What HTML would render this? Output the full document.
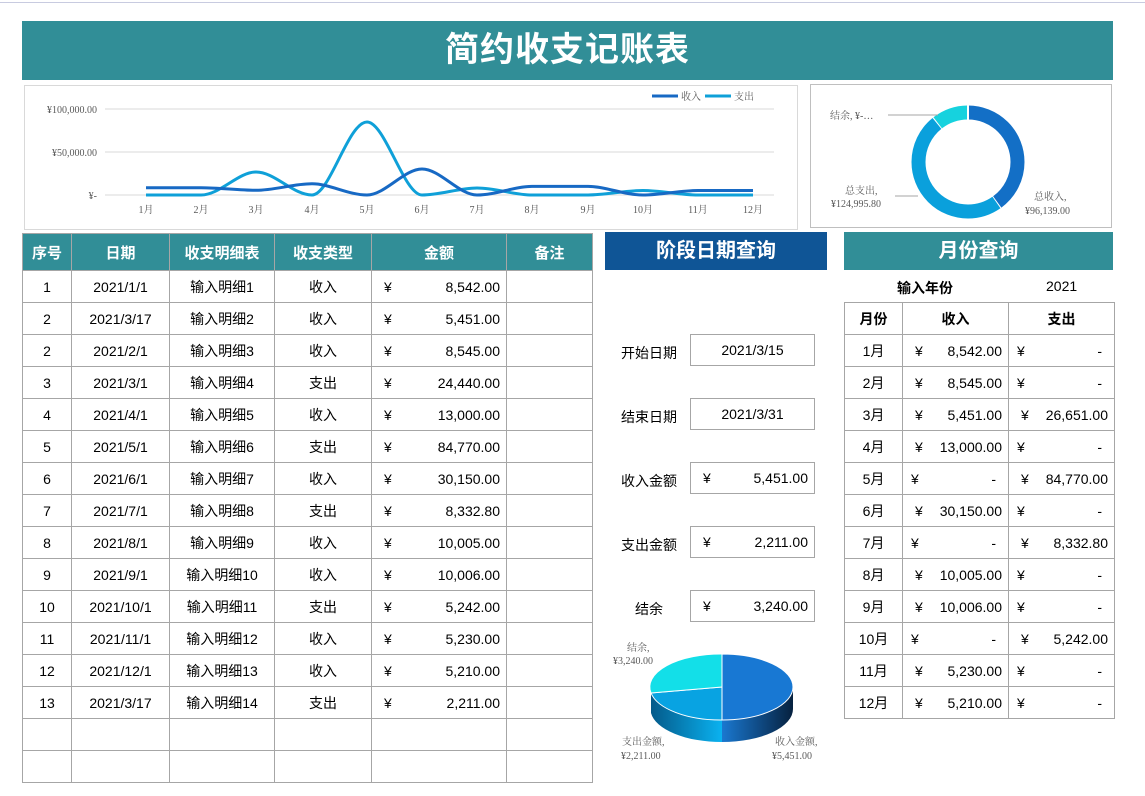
<!DOCTYPE html>
<html><head><meta charset="utf-8"><style>
*{margin:0;padding:0;box-sizing:border-box}
body{width:1145px;height:796px;background:#fff;position:relative;overflow:hidden;font-family:"Liberation Sans","Noto Sans CJK SC",sans-serif;color:#000;font-size:14px}
.a{position:absolute}
.title{left:22px;top:21px;width:1091px;height:59px;background:#318e97;color:#fff;font-size:34px;font-weight:bold;text-align:center;line-height:59px;letter-spacing:1px}
table{border-collapse:collapse;position:absolute;table-layout:fixed}
td{border:1px solid #a6a6a6;height:32px;text-align:center;font-size:14px;padding:0;white-space:nowrap}
th{background:#318e97;color:#fff;border:1px solid #a6a6a6;font-weight:bold;font-size:15px;height:37px}
.m{display:flex;justify-content:space-between;padding:0 6px 0 12px}
.hd{color:#fff;font-weight:bold;font-size:20px;text-align:center;line-height:38px;height:38px}
.lbl{width:80px;text-align:center;font-size:14px}
.box{border:1px solid #a6a6a6;width:125px;height:32px;text-align:center;line-height:30px;font-size:14px}
.box.m{display:flex;justify-content:space-between;padding:0 6px 0 12px;line-height:30px}
</style></head><body>
<div class="a" style="left:0;top:2px;width:1145px;height:1px;background:#c8cbe0"></div>
<div class="a title">简约收支记账表</div>

<div class="a" style="left:24px;top:85px;width:774px;height:145px;border:1px solid #d9d9d9"></div>
<svg class="a" style="left:0;top:0" width="1145" height="796" font-family="Liberation Serif, Noto Serif CJK SC, serif" font-size="10" fill="#595959">
<line x1="105" y1="109" x2="774" y2="109" stroke="#d9d9d9"/>
<line x1="105" y1="152" x2="774" y2="152" stroke="#d9d9d9"/>
<line x1="105" y1="195" x2="774" y2="195" stroke="#d9d9d9"/>
<text x="97" y="113" text-anchor="end">¥100,000.00</text>
<text x="97" y="156" text-anchor="end">¥50,000.00</text>
<text x="97" y="199" text-anchor="end">¥-</text>
<g text-anchor="middle" font-size="10">
<text x="146" y="213">1月</text><text x="201" y="213">2月</text><text x="256" y="213">3月</text><text x="312" y="213">4月</text><text x="367" y="213">5月</text><text x="422" y="213">6月</text><text x="477" y="213">7月</text><text x="532" y="213">8月</text><text x="588" y="213">9月</text><text x="643" y="213">10月</text><text x="698" y="213">11月</text><text x="753" y="213">12月</text>
</g>
<path fill="none" stroke="#0fa0d8" stroke-width="3" d="M146 195 C164 195 183 195 201 195 C220 195 238 172 256 172 C275 172 293 195 312 195 C330 195 348 122 367 122 C385 122 404 195 422 195 C440 195 459 188 477 188 C496 188 514 195 532 195 C551 195 569 195 588 195 C606 195 624 190.5 643 190.5 C661 190.5 680 195 698 195 C716 195 735 195 753 195"/>
<path fill="none" stroke="#1769c4" stroke-width="3" d="M146 187.7 C164 187.7 183 187.7 201 187.7 C220 187.7 238 190.3 256 190.3 C275 190.3 293 183.8 312 183.8 C330 183.8 348 195 367 195 C385 195 404 169 422 169 C440 169 459 195 477 195 C496 195 514 186.4 532 186.4 C551 186.4 569 186.4 588 186.4 C606 186.4 624 195 643 195 C661 195 680 190.5 698 190.5 C716 190.5 735 190.5 753 190.5"/>
<line x1="652" y1="96" x2="678" y2="96" stroke="#1769c4" stroke-width="3"/>
<text x="681" y="100">收入</text>
<line x1="705" y1="96" x2="731" y2="96" stroke="#0fa0d8" stroke-width="3"/>
<text x="734" y="100">支出</text>

<rect x="810.5" y="84.5" width="301" height="143" fill="none" stroke="#bfbfbf"/>
<g transform="rotate(-90 968 162)" fill="none" stroke-width="14">
<circle cx="968" cy="162" r="49.5" stroke="#136fc6" stroke-dasharray="124 311"/>
<circle cx="968" cy="162" r="49.5" stroke="#0aa0dc" stroke-dasharray="0 125 152 311"/>
<circle cx="968" cy="162" r="49.5" stroke="#16d2de" stroke-dasharray="0 278 32 311"/>
</g>
<line x1="968" y1="105" x2="968" y2="120" stroke="#fff" stroke-width="2"/>
<line x1="888" y1="115" x2="938" y2="115" stroke="#a6a6a6"/>
<line x1="895" y1="196" x2="918" y2="196" stroke="#a6a6a6"/>
<text x="830" y="119">结余, ¥-…</text>
<text x="845" y="194">总支出,</text>
<text x="831" y="207">¥124,995.80</text>
<text x="1034" y="200">总收入,</text>
<text x="1025" y="214">¥96,139.00</text>

<!-- 3D pie -->
<defs>
<linearGradient id="gr" x1="0" x2="1"><stop offset="0" stop-color="#1a78d0"/><stop offset="1" stop-color="#06213f"/></linearGradient>
<linearGradient id="gl" x1="0" x2="1"><stop offset="0" stop-color="#045a8a"/><stop offset="1" stop-color="#0ab2f0"/></linearGradient>
</defs>
<path d="M722 720 L722 742 A71 33 0 0 0 793 709 L793 687 A71 33 0 0 1 722 720Z" fill="url(#gr)"/>
<path d="M651 691 L651 713 A71 33 0 0 0 722 742 L722 720 A71 33 0 0 1 651 691Z" fill="url(#gl)"/>
<path d="M722 687 L722 654 A71 33 0 0 1 722 720Z" fill="#1878d3" stroke="#fff"/>
<path d="M722 687 L722 720 A71 33 0 0 1 651 693Z" fill="#08a3e2" stroke="#fff"/>
<path d="M722 687 L651 693 A71 33 0 0 1 722 654Z" fill="#13dfe8" stroke="#fff"/>
<text x="627" y="651">结余,</text>
<text x="613" y="664">¥3,240.00</text>
<text x="622" y="745">支出金额,</text>
<text x="621" y="759">¥2,211.00</text>
<text x="775" y="745">收入金额,</text>
<text x="772" y="759">¥5,451.00</text>
</svg>

<table style="left:22px;top:233px;width:571px">
<colgroup><col style="width:49px"><col style="width:98px"><col style="width:105px"><col style="width:97px"><col style="width:135px"><col style="width:86px"></colgroup>
<tr><th>序号</th><th>日期</th><th>收支明细表</th><th>收支类型</th><th>金额</th><th>备注</th></tr>
<tr><td>1</td><td>2021/1/1</td><td>输入明细1</td><td>收入</td><td><div class="m"><span>¥</span><span>8,542.00</span></div></td><td></td></tr>
<tr><td>2</td><td>2021/3/17</td><td>输入明细2</td><td>收入</td><td><div class="m"><span>¥</span><span>5,451.00</span></div></td><td></td></tr>
<tr><td>2</td><td>2021/2/1</td><td>输入明细3</td><td>收入</td><td><div class="m"><span>¥</span><span>8,545.00</span></div></td><td></td></tr>
<tr><td>3</td><td>2021/3/1</td><td>输入明细4</td><td>支出</td><td><div class="m"><span>¥</span><span>24,440.00</span></div></td><td></td></tr>
<tr><td>4</td><td>2021/4/1</td><td>输入明细5</td><td>收入</td><td><div class="m"><span>¥</span><span>13,000.00</span></div></td><td></td></tr>
<tr><td>5</td><td>2021/5/1</td><td>输入明细6</td><td>支出</td><td><div class="m"><span>¥</span><span>84,770.00</span></div></td><td></td></tr>
<tr><td>6</td><td>2021/6/1</td><td>输入明细7</td><td>收入</td><td><div class="m"><span>¥</span><span>30,150.00</span></div></td><td></td></tr>
<tr><td>7</td><td>2021/7/1</td><td>输入明细8</td><td>支出</td><td><div class="m"><span>¥</span><span>8,332.80</span></div></td><td></td></tr>
<tr><td>8</td><td>2021/8/1</td><td>输入明细9</td><td>收入</td><td><div class="m"><span>¥</span><span>10,005.00</span></div></td><td></td></tr>
<tr><td>9</td><td>2021/9/1</td><td>输入明细10</td><td>收入</td><td><div class="m"><span>¥</span><span>10,006.00</span></div></td><td></td></tr>
<tr><td>10</td><td>2021/10/1</td><td>输入明细11</td><td>支出</td><td><div class="m"><span>¥</span><span>5,242.00</span></div></td><td></td></tr>
<tr><td>11</td><td>2021/11/1</td><td>输入明细12</td><td>收入</td><td><div class="m"><span>¥</span><span>5,230.00</span></div></td><td></td></tr>
<tr><td>12</td><td>2021/12/1</td><td>输入明细13</td><td>收入</td><td><div class="m"><span>¥</span><span>5,210.00</span></div></td><td></td></tr>
<tr><td>13</td><td>2021/3/17</td><td>输入明细14</td><td>支出</td><td><div class="m"><span>¥</span><span>2,211.00</span></div></td><td></td></tr>
<tr><td></td><td></td><td></td><td></td><td></td><td></td></tr>
<tr><td></td><td></td><td></td><td></td><td></td><td></td></tr>
</table>

<div class="a hd" style="left:605px;top:232px;width:222px;background:#0f5596">阶段日期查询</div>
<div class="a hd" style="left:844px;top:232px;width:269px;background:#318e97">月份查询</div>

<div class="a lbl" style="left:609px;top:343px">开始日期</div>
<div class="a box" style="left:690px;top:334px">2021/3/15</div>
<div class="a lbl" style="left:609px;top:407px">结束日期</div>
<div class="a box" style="left:690px;top:398px">2021/3/31</div>
<div class="a lbl" style="left:609px;top:471px">收入金额</div>
<div class="a box m" style="left:690px;top:462px"><span>¥</span><span>5,451.00</span></div>
<div class="a lbl" style="left:609px;top:535px">支出金额</div>
<div class="a box m" style="left:690px;top:526px"><span>¥</span><span>2,211.00</span></div>
<div class="a lbl" style="left:609px;top:599px">结余</div>
<div class="a box m" style="left:690px;top:590px"><span>¥</span><span>3,240.00</span></div>

<div class="a" style="left:897px;top:278px;font-weight:bold">输入年份</div>
<div class="a" style="left:1046px;top:278px">2021</div>

<table style="left:844px;top:302px;width:270px">
<colgroup><col style="width:58px"><col style="width:106px"><col style="width:106px"></colgroup>
<tr><td style="font-weight:bold">月份</td><td style="font-weight:bold">收入</td><td style="font-weight:bold">支出</td></tr>
<tr><td>1月</td><td><div class="m"><span>¥</span><span>8,542.00</span></div></td><td><div class="m" style="padding:0 12px 0 8px"><span>¥</span><span>-</span></div></td></tr>
<tr><td>2月</td><td><div class="m"><span>¥</span><span>8,545.00</span></div></td><td><div class="m" style="padding:0 12px 0 8px"><span>¥</span><span>-</span></div></td></tr>
<tr><td>3月</td><td><div class="m"><span>¥</span><span>5,451.00</span></div></td><td><div class="m" style="padding:0 6px 0 12px"><span>¥</span><span>26,651.00</span></div></td></tr>
<tr><td>4月</td><td><div class="m"><span>¥</span><span>13,000.00</span></div></td><td><div class="m" style="padding:0 12px 0 8px"><span>¥</span><span>-</span></div></td></tr>
<tr><td>5月</td><td><div class="m" style="padding:0 12px 0 8px"><span>¥</span><span>-</span></div></td><td><div class="m" style="padding:0 6px 0 12px"><span>¥</span><span>84,770.00</span></div></td></tr>
<tr><td>6月</td><td><div class="m"><span>¥</span><span>30,150.00</span></div></td><td><div class="m" style="padding:0 12px 0 8px"><span>¥</span><span>-</span></div></td></tr>
<tr><td>7月</td><td><div class="m" style="padding:0 12px 0 8px"><span>¥</span><span>-</span></div></td><td><div class="m" style="padding:0 6px 0 12px"><span>¥</span><span>8,332.80</span></div></td></tr>
<tr><td>8月</td><td><div class="m"><span>¥</span><span>10,005.00</span></div></td><td><div class="m" style="padding:0 12px 0 8px"><span>¥</span><span>-</span></div></td></tr>
<tr><td>9月</td><td><div class="m"><span>¥</span><span>10,006.00</span></div></td><td><div class="m" style="padding:0 12px 0 8px"><span>¥</span><span>-</span></div></td></tr>
<tr><td>10月</td><td><div class="m" style="padding:0 12px 0 8px"><span>¥</span><span>-</span></div></td><td><div class="m" style="padding:0 6px 0 12px"><span>¥</span><span>5,242.00</span></div></td></tr>
<tr><td>11月</td><td><div class="m"><span>¥</span><span>5,230.00</span></div></td><td><div class="m" style="padding:0 12px 0 8px"><span>¥</span><span>-</span></div></td></tr>
<tr><td>12月</td><td><div class="m"><span>¥</span><span>5,210.00</span></div></td><td><div class="m" style="padding:0 12px 0 8px"><span>¥</span><span>-</span></div></td></tr>
</table>
</body></html>
